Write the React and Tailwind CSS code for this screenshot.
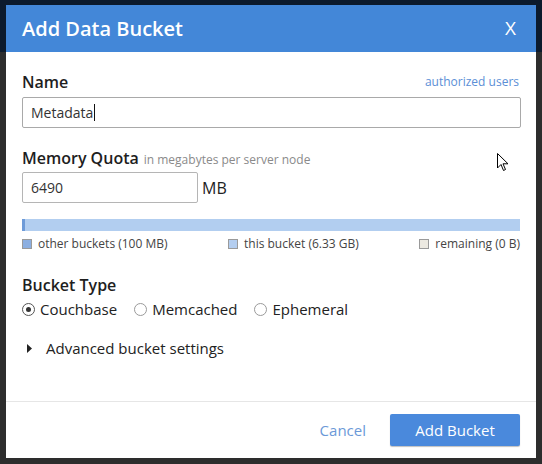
import React from 'react';

const font = { fontFamily: '"Open Sans", "Liberation Sans", sans-serif' };

const Radio = ({ checked, label }) => (
  <label className="flex items-center gap-[5px]">
    <span className={`w-[13px] h-[13px] rounded-full border flex items-center justify-center bg-white ${checked ? 'border-[#555]' : 'border-[#9a9a9a]'}`}>
      {checked && <span className="w-[5px] h-[5px] rounded-full bg-[#333]" />}
    </span>
    <span className="text-[15px] leading-5 text-[#222]">{label}</span>
  </label>
);

const LegendItem = ({ color, label, className = '' }) => (
  <div className={`flex items-center gap-[6px] ${className}`}>
    <span className={`w-[10px] h-[10px] border border-[#9a9a9a] ${color}`} />
    <span>{label}</span>
  </div>
);

export default function App() {
  return (
    <div
      className="relative w-[542px] h-[464px] overflow-hidden pt-[5px] pl-[6px] bg-[linear-gradient(to_bottom,#0c1a2c_0,#0c1a2c_52px,#2d2d2d_52px)]"
      style={font}
    >
      {/* Modal */}
      <div className="w-[530px] h-[453px] bg-white flex flex-col">
        {/* Header */}
        <div className="h-[47px] shrink-0 bg-[#4387d8] flex items-center justify-between pl-4 pr-5">
          <h3 className="text-[20px] font-semibold text-white leading-none">Add Data Bucket</h3>
          <button className="text-[19px] text-white leading-none">X</button>
        </div>

        {/* Body */}
        <div className="flex-1 px-4 pt-[19px] border-b border-[#e6e6e6]">
          <div className="flex items-center justify-between h-[22px]">
            <span className="text-[16px] font-semibold text-[#1e1e1e]">Name</span>
            <a className="text-[12px] text-[#5b8fd6] pr-[1px]">authorized users</a>
          </div>
          <div className="mt-1 w-[499px] h-[31px] border border-[#a9a9a9] rounded-[2px] flex items-center pl-2 text-[14px] text-[#333]">
            Metadata<span className="w-px h-[17px] bg-[#111] ml-px" />
          </div>

          <div className="mt-[18px] h-[22px] flex items-baseline gap-[5px]">
            <span className="text-[16px] font-semibold text-[#1e1e1e]">Memory Quota</span>
            <span className="text-[12px] text-[#8a8a8a]">in megabytes per server node</span>
          </div>
          <div className="mt-1 flex items-center gap-[4px]">
            <div className="w-[176px] h-[31px] border border-[#b5b5b5] rounded-[2px] flex items-center pl-2 text-[14px] text-[#333]">
              6490
            </div>
            <span className="text-[16px] text-[#222]">MB</span>
          </div>

          <div className="mt-[16px] w-[498px] h-[12px] bg-[#b2cef0] flex">
            <div className="w-[3px] h-full bg-[#6e9bd8]" />
          </div>
          <div className="mt-[5px] w-[498px] flex items-center text-[12px] leading-4 text-[#444]">
            <LegendItem className="w-[206px]" color="bg-[#8cafe1]" label="other buckets (100 MB)" />
            <LegendItem color="bg-[#b4cef0]" label="this bucket (6.33 GB)" />
            <LegendItem className="ml-auto" color="bg-[#ece9e1]" label="remaining (0 B)" />
          </div>

          <div className="mt-[21px] h-[22px] text-[16px] font-semibold text-[#1e1e1e]">Bucket Type</div>
          <div className="mt-[4px] flex items-center gap-[17px]">
            <Radio checked label="Couchbase" />
            <Radio label="Memcached" />
            <Radio label="Ephemeral" />
          </div>

          <div className="mt-[19px] flex items-center gap-[14px] pl-[5px] h-5">
            <svg width="5" height="9" viewBox="0 0 5 9">
              <path d="M0 0 L5 4.5 L0 9 Z" fill="#222" />
            </svg>
            <span className="text-[15px] text-[#222]">Advanced bucket settings</span>
          </div>
        </div>

        {/* Footer */}
        <div className="h-[56px] shrink-0 flex items-center justify-end gap-[24px] pr-4">
          <button className="text-[15px] text-[#6b99d8]">Cancel</button>
          <button className="w-[130px] h-[32px] rounded-[2px] bg-[#4a89dc] text-white text-[15px] shadow-[0_1px_1px_rgba(0,0,0,0.25)]">
            Add Bucket
          </button>
        </div>
      </div>

      {/* mouse pointer */}
      <svg className="absolute left-[497px] top-[153px]" width="13" height="19" viewBox="0 0 13 19">
        <path d="M0.5 0.5 L0.5 15 L4 11.5 L6.5 17.5 L8.5 16.5 L6 10.8 L11 10.8 Z" fill="#fff" stroke="#000" strokeWidth="1" strokeLinejoin="miter" />
      </svg>
    </div>
  );
}
